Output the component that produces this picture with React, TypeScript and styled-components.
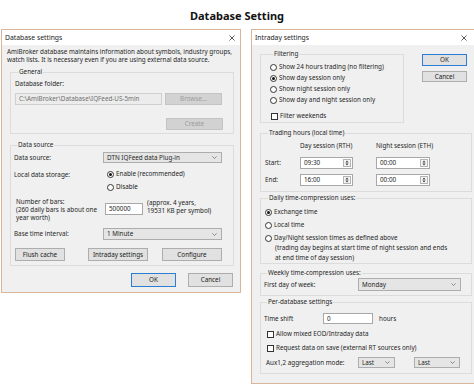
import React from 'react';
import styled, { createGlobalStyle } from 'styled-components';

const GlobalStyle = createGlobalStyle`
  body {
    margin: 0;
    background: #ffffff;
    font-family: "Noto Sans", "Open Sans", sans-serif;
    color: #1a1a1a;
  }
`;

const Page = styled.div`
  width: 474px;
  height: 387px;
  overflow: hidden;
`;

const Heading = styled.h1`
  margin: 0;
  height: 29px;
  line-height: 31px;
  text-align: center;
  font-size: 11px;
  font-weight: 700;
  color: #111;
`;

const Dialogs = styled.div`
  display: flex;
  align-items: flex-start;
  gap: 10px;
  padding-left: 1px;
`;

interface DialogProps {
  $width: number;
  $height: number;
}

const Dialog = styled.div<DialogProps>`
  flex: none;
  width: ${(p) => p.$width}px;
  height: ${(p) => p.$height}px;
  box-sizing: border-box;
  border: 1px solid #d9b69b;
  background: #f0f0f0;
  display: flex;
  flex-direction: column;
  font-size: 6.3px;
  line-height: 8px;
  white-space: nowrap;
  color: #262626;
`;

const TitleBar = styled.div<{ $right: number }>`
  flex: none;
  height: 15px;
  background: #ffffff;
  display: flex;
  align-items: center;
  justify-content: space-between;
  padding: 0 ${(p) => p.$right}px 0 3px;
  font-size: 6.8px;
  color: #222;
`;

const Body = styled.div<{ $pad: string }>`
  display: flex;
  flex-direction: column;
  padding: ${(p) => p.$pad};
`;

const Description = styled.p`
  margin: 0 -3px;
  line-height: 8px;
`;

interface GroupProps {
  $mt?: number;
  $pad: string;
  $width?: number;
}

const Group = styled.fieldset<GroupProps>`
  margin: ${(p) => p.$mt ?? 0}px 0 0;
  padding: ${(p) => p.$pad};
  border: 1px solid #dcdcdc;
  min-width: 0;
  ${(p) => (p.$width ? `width: ${p.$width}px; box-sizing: border-box; flex: none;` : '')}
  display: flex;
  flex-direction: column;
`;

const Legend = styled.legend`
  padding: 0 1px;
  margin-left: 3px;
  line-height: 8px;
`;

interface RowProps {
  $mt?: number;
  $h?: number;
  $ml?: number;
}

const Row = styled.div<RowProps>`
  display: flex;
  align-items: center;
  margin-top: ${(p) => p.$mt ?? 0}px;
  margin-left: ${(p) => p.$ml ?? 0}px;
  ${(p) => (p.$h ? `height: ${p.$h}px;` : '')}
`;

const Label = styled.span<{ $w?: number }>`
  flex: none;
  ${(p) => (p.$w ? `width: ${p.$w}px;` : '')}
`;

const StackedLabel = styled.div<{ $w: number }>`
  flex: none;
  width: ${(p) => p.$w}px;
  line-height: 8px;
`;

interface ButtonProps {
  $w: number;
  $h?: number;
  $primary?: boolean;
  $disabled?: boolean;
  $ml?: number;
}

const Button = styled.div<ButtonProps>`
  flex: none;
  width: ${(p) => p.$w}px;
  height: ${(p) => p.$h ?? 12}px;
  margin-left: ${(p) => p.$ml ?? 0}px;
  box-sizing: border-box;
  border: 1px solid
    ${(p) => (p.$primary ? '#2a7fd4' : p.$disabled ? '#c4c4c4' : '#adadad')};
  background: ${(p) => (p.$disabled ? '#d2d2d2' : '#e1e1e1')};
  color: ${(p) => (p.$disabled ? '#9c9c9c' : '#1a1a1a')};
  display: flex;
  align-items: center;
  justify-content: center;
`;

const ButtonColumn = styled.div`
  display: flex;
  flex-direction: column;
  gap: 5px;
  margin: 4px 5px 0 auto;
`;

interface FieldProps {
  $w: number;
  $h?: number;
  $disabled?: boolean;
  $ml?: number;
}

const TextField = styled.div<FieldProps>`
  flex: none;
  width: ${(p) => p.$w}px;
  height: ${(p) => p.$h ?? 12}px;
  margin-left: ${(p) => p.$ml ?? 0}px;
  box-sizing: border-box;
  border: 1px solid ${(p) => (p.$disabled ? '#cfcfcf' : '#a8a8a8')};
  background: ${(p) => (p.$disabled ? '#ececec' : '#ffffff')};
  color: ${(p) => (p.$disabled ? '#707070' : '#1a1a1a')};
  display: flex;
  align-items: center;
  justify-content: space-between;
  padding-left: 3px;
`;

const SelectBox = styled.div<FieldProps>`
  flex: none;
  width: ${(p) => p.$w}px;
  height: ${(p) => p.$h ?? 12}px;
  margin-left: ${(p) => p.$ml ?? 0}px;
  box-sizing: border-box;
  border: 1px solid #adadad;
  background: #e5e5e5;
  display: flex;
  align-items: center;
  justify-content: space-between;
  padding: 0 4px 0 3px;
`;

const Spinner = styled.div`
  flex: none;
  width: 8px;
  height: 8px;
  margin-right: 1px;
  box-sizing: border-box;
  border: 1px solid #b4b4b4;
  background: #f4f4f4;
  display: flex;
  align-items: center;
  justify-content: center;
`;

const OptionList = styled.div<{ $gap: number }>`
  display: flex;
  flex-direction: column;
  gap: ${(p) => p.$gap}px;
`;

const Option = styled.div<{ $mt?: number; $ml?: number }>`
  display: flex;
  align-items: center;
  height: 10px;
  gap: 2px;
  margin-top: ${(p) => p.$mt ?? 0}px;
  margin-left: ${(p) => p.$ml ?? 0}px;
`;

const RadioMark = styled.span<{ $on?: boolean }>`
  flex: none;
  width: 7px;
  height: 7px;
  box-sizing: border-box;
  border: 1px solid #333;
  border-radius: 50%;
  background: #fff;
  display: flex;
  align-items: center;
  justify-content: center;
  &::after {
    content: '';
    width: 3px;
    height: 3px;
    border-radius: 50%;
    background: ${(p) => (p.$on ? '#111' : 'transparent')};
  }
`;

const CheckMark = styled.span`
  flex: none;
  width: 7px;
  height: 7px;
  box-sizing: border-box;
  border: 1px solid #333;
  background: #fff;
`;

const Note = styled.div`
  margin-left: 10px;
  line-height: 10px;
`;

const Footer = styled.div`
  display: flex;
  justify-content: flex-end;
  gap: 12px;
  margin: 7px 1px 0 0;
`;

const CloseIcon = () => (
  <svg width="6" height="6" viewBox="0 0 6 6">
    <path d="M0.5 0.5 L5.5 5.5 M5.5 0.5 L0.5 5.5" stroke="#333" strokeWidth="0.8" />
  </svg>
);

const Chevron = () => (
  <svg width="5" height="3" viewBox="0 0 5 3">
    <path d="M0.4 0.4 L2.5 2.5 L4.6 0.4" stroke="#666" strokeWidth="0.7" fill="none" />
  </svg>
);

const SpinArrows = () => (
  <svg width="4" height="6" viewBox="0 0 4 6">
    <path d="M2 0.4 L3.6 2.4 L0.4 2.4 Z M2 5.6 L3.6 3.6 L0.4 3.6 Z" fill="#444" />
  </svg>
);

const Select = ({ w, h, ml, children }: { w: number; h?: number; ml?: number; children: React.ReactNode }) => (
  <SelectBox $w={w} $h={h} $ml={ml}>
    <span>{children}</span>
    <Chevron />
  </SelectBox>
);

const TimeField = ({ value, ml }: { value: string; ml?: number }) => (
  <TextField $w={ml ? 54 : 53} $ml={ml}>
    <span>{value}</span>
    <Spinner>
      <SpinArrows />
    </Spinner>
  </TextField>
);

const Radio = ({ on, mt, children }: { on?: boolean; mt?: number; children: React.ReactNode }) => (
  <Option $mt={mt}>
    <RadioMark $on={on} />
    <span>{children}</span>
  </Option>
);

const Check = ({ mt, ml, children }: { mt?: number; ml?: number; children: React.ReactNode }) => (
  <Option $mt={mt} $ml={ml}>
    <CheckMark />
    <span>{children}</span>
  </Option>
);

const DatabaseDialog = () => (
  <Dialog $width={240} $height={264}>
    <TitleBar $right={5}>
      <span>Database settings</span>
      <CloseIcon />
    </TitleBar>
    <Body $pad="3px 6px 0 8px">
      <Description>
        AmiBroker database maintains information about symbols, industry groups,
        <br />
        watch lists. It is necessary even if you are using external data source.
      </Description>

      <Group $mt={4} $pad="4px 10px 3px 4px">
        <Legend>General</Legend>
        <Label>Database folder:</Label>
        <Row $mt={5}>
          <TextField $w={147} $disabled>
            C:\AmiBroker\Database\IQFeed-US-5min
          </TextField>
          <Button $w={57} $ml={3} $disabled>
            Browse...
          </Button>
        </Row>
        <Row $mt={13} style={{ justifyContent: 'flex-end' }}>
          <Button $w={57} $disabled>
            Create
          </Button>
        </Row>
      </Group>

      <Group $mt={7} $pad="3px 10px 4px 3px">
        <Legend>Data source</Legend>
        <Row $h={11}>
          <Label $w={89}>Data source:</Label>
          <Select w={119} h={11}>
            DTN IQFeed data Plug-in
          </Select>
        </Row>
        <Row $mt={6} style={{ alignItems: 'flex-start' }}>
          <Label $w={93} style={{ paddingTop: 2 }}>
            Local data storage:
          </Label>
          <OptionList $gap={3}>
            <Radio on>Enable (recommended)</Radio>
            <Radio>Disable</Radio>
          </OptionList>
        </Row>
        <Row $mt={6} $ml={2} style={{ alignItems: 'flex-start' }}>
          <StackedLabel $w={89}>
            Number of bars:
            <br />
            (260 daily bars is about one
            <br />
            year worth)
          </StackedLabel>
          <TextField $w={38} style={{ marginTop: 5 }}>
            500000
          </TextField>
          <StackedLabel $w={80} style={{ marginTop: 1, marginLeft: 4 }}>
            (approx. 4 years,
            <br />
            19531 KB per symbol)
          </StackedLabel>
        </Row>
        <Row $mt={6}>
          <Label $w={89}>Base time interval:</Label>
          <Select w={119}>1 Minute</Select>
        </Row>
        <Row $mt={8} $ml={1}>
          <Button $w={50} $h={13}>
            Flush cache
          </Button>
          <Button $w={60} $h={13} $ml={23}>
            Intraday settings
          </Button>
          <Button $w={60} $h={13} $ml={14}>
            Configure
          </Button>
        </Row>
      </Group>

      <Footer>
        <Button $w={45} $h={14} $primary>
          OK
        </Button>
        <Button $w={45} $h={14}>
          Cancel
        </Button>
      </Footer>
    </Body>
  </Dialog>
);

const IntradayDialog = () => (
  <Dialog $width={224} $height={355}>
    <TitleBar $right={7}>
      <span>Intraday settings</span>
      <CloseIcon />
    </TitleBar>
    <Body $pad="5px 2px 0 8px">
      <Row style={{ alignItems: 'flex-start' }}>
        <Group $width={144} $pad="4px 4px 1px 9px">
          <Legend>Filtering</Legend>
          <OptionList $gap={1}>
            <Radio>Show 24 hours trading (no filtering)</Radio>
            <Radio on>Show day session only</Radio>
            <Radio>Show night session only</Radio>
            <Radio>Show day and night session only</Radio>
          </OptionList>
          <Check mt={6} ml={1}>
            Filter weekends
          </Check>
        </Group>
        <ButtonColumn>
          <Button $w={45} $primary>
            OK
          </Button>
          <Button $w={45} $h={11}>
            Cancel
          </Button>
        </ButtonColumn>
      </Row>

      <Group $mt={6} $pad="5px 4px 5px 4px">
        <Legend>Trading hours (local time)</Legend>
        <Row>
          <Label $w={35} />
          <Label $w={76}>Day session (RTH)</Label>
          <Label>Night session (ETH)</Label>
        </Row>
        <Row $mt={7}>
          <Label $w={35}>Start:</Label>
          <TimeField value="09:30" />
          <TimeField value="00:00" ml={23} />
        </Row>
        <Row $mt={5}>
          <Label $w={35}>End:</Label>
          <TimeField value="16:00" />
          <TimeField value="00:00" ml={23} />
        </Row>
      </Group>

      <Group $mt={2} $pad="5px 4px 0 4px">
        <Legend>Daily time-compression uses:</Legend>
        <OptionList $gap={3}>
          <Radio on>Exchange time</Radio>
          <Radio>Local time</Radio>
          <Radio>Day/Night session times as defined above</Radio>
        </OptionList>
        <Note>
          (trading day begins at start time of night session and ends
          <br />
          at end time of day session)
        </Note>
      </Group>

      <Group $mt={5} $pad="1px 4px 4px 3px">
        <Legend>Weekly time-compression uses:</Legend>
        <Row>
          <Label $w={94}>First day of week:</Label>
          <Select w={103} h={13}>
            Monday
          </Select>
        </Row>
      </Group>

      <Group $mt={2} $pad="7px 4px 5px 3px">
        <Legend>Per-database settings</Legend>
        <Row>
          <Label $w={59}>Time shift</Label>
          <TextField $w={50} $h={11}>
            0
          </TextField>
          <Label style={{ marginLeft: 6 }}>hours</Label>
        </Row>
        <Check mt={5} ml={3}>
          Allow mixed EOD/Intraday data
        </Check>
        <Check mt={4} ml={3}>
          Request data on save (external RT sources only)
        </Check>
        <Row $mt={4} $ml={2}>
          <Label $w={92}>Aux1,2 aggregation mode:</Label>
          <Select w={37} h={11}>
            Last
          </Select>
          <Select w={46} h={11} ml={19}>
            Last
          </Select>
        </Row>
      </Group>
    </Body>
  </Dialog>
);

const App = () => (
  <Page>
    <GlobalStyle />
    <Heading>Database Setting</Heading>
    <Dialogs>
      <DatabaseDialog />
      <IntradayDialog />
    </Dialogs>
  </Page>
);

export default App;
